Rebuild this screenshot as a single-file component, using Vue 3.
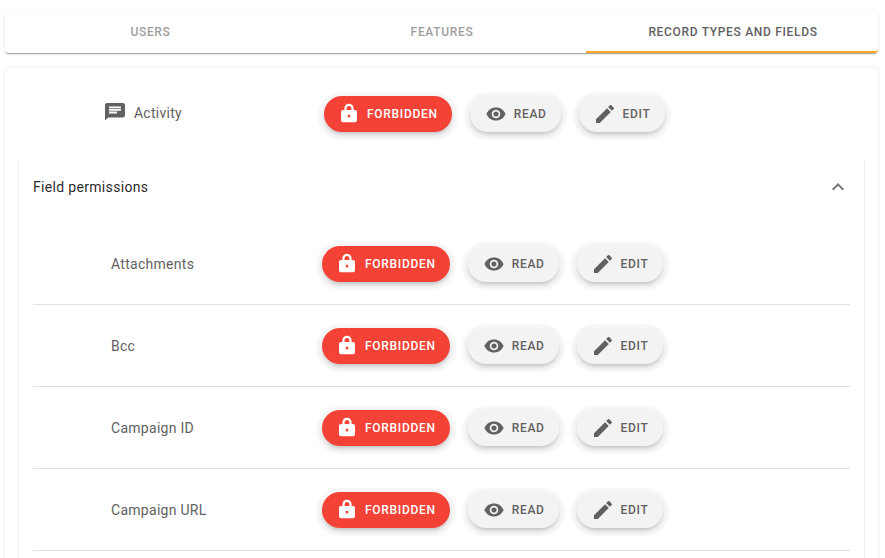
<template>
  <div class="page">
    <div class="tabs">
      <div
        v-for="tab in tabs"
        :key="tab"
        class="tab"
        :class="{ active: tab === activeTab }"
      >
        {{ tab }}
      </div>
    </div>

    <div class="card">
      <div class="record-row">
        <div class="record-name">
          <svg class="record-icon" viewBox="0 0 24 24"><path :d="icons.message" /></svg>
          <span>Activity</span>
        </div>
        <div class="perm-buttons">
          <button
            v-for="btn in buttons"
            :key="btn.label"
            type="button"
            class="perm-btn"
            :class="{ selected: btn.label === 'Forbidden' }"
          >
            <svg class="btn-icon" viewBox="0 0 24 24"><path :d="btn.icon" /></svg>
            {{ btn.label }}
          </button>
        </div>
      </div>

      <div class="panel">
        <div class="panel-header">
          <span>Field permissions</span>
          <svg class="chevron" viewBox="0 0 24 24"><path :d="icons.chevronUp" /></svg>
        </div>
        <div class="fields">
          <div v-for="field in fields" :key="field" class="field-row">
            <div class="field-name">{{ field }}</div>
            <div class="perm-buttons">
              <button
                v-for="btn in buttons"
                :key="btn.label"
                type="button"
                class="perm-btn"
                :class="{ selected: btn.label === 'Forbidden' }"
              >
                <svg class="btn-icon" viewBox="0 0 24 24"><path :d="btn.icon" /></svg>
                {{ btn.label }}
              </button>
            </div>
          </div>
        </div>
      </div>
    </div>
  </div>
</template>

<script setup>
const tabs = ['Users', 'Features', 'Record types and fields']
const activeTab = 'Record types and fields'

// Material icon paths, message, lock and eye adjusted to match the screenshot
const icons = {
  message: 'M20 2H4c-1.1 0-2 .9-2 2v15.5l3.2-3H20c1.1 0 2-.9 2-2V4c0-1.1-.9-2-2-2zM6 8h12v1.8H6V8zm8 4.4H6v-1.8h8v1.8zM18 7.2H6V5.4h12v1.8z',
  lock: 'M7.4 8V6.3C7.4 3.7 9.4 1.7 12 1.700s4.600 2 4.600 4.600V8H18c1.100 0 2 .9 2 2v8.200c0 1.100-.9 2-2 2H6c-1.100 0-2-.9-2-2V10c0-1.100.9-2 2-2h1.400zM9.600 8h4.800V6.300c0-1.400-1-2.400-2.400-2.400S9.600 4.900 9.600 6.300V8zM12 12.800a1.400 1.400 0 1 0 0 2.800 1.400 1.400 0 1 0 0-2.800z',
  eye: 'M12 5.5C7.6 5.5 3.9 8.2 2.4 12c1.5 3.8 5.2 6.5 9.600 6.500s8.100-2.700 9.600-6.500C20.100 8.200 16.400 5.500 12 5.500zM12 16.300c-2.400 0-4.300-1.900-4.300-4.300S9.600 7.700 12 7.700s4.300 1.900 4.300 4.300-1.900 4.300-4.300 4.300zm0-6.900c-1.400 0-2.600 1.200-2.600 2.600s1.200 2.600 2.600 2.600 2.600-1.200 2.600-2.600-1.200-2.600-2.600-2.600z',
  pencil: 'M3 17.25V21h3.75L17.81 9.94l-3.75-3.75L3 17.25zM20.71 7.04c.39-.39.39-1.02 0-1.41l-2.34-2.34c-.39-.39-1.02-.39-1.41 0l-1.83 1.83 3.75 3.75 1.83-1.83z',
  chevronUp: 'M7.41 15.41L12 10.83l4.59 4.58L18 14l-6-6-6 6z'
}

const buttons = [
  { label: 'Forbidden', icon: icons.lock },
  { label: 'Read', icon: icons.eye },
  { label: 'Edit', icon: icons.pencil }
]

const fields = ['Attachments', 'Bcc', 'Campaign ID', 'Campaign URL']
</script>

<style>
html,
body {
  margin: 0;
  height: 100%;
  overflow: hidden;
  background: #fff;
}
</style>

<style scoped>
.page {
  height: 558px;
  overflow: hidden;
  padding: 11px 7px 0 5px;
  box-sizing: border-box;
  font-family: Roboto, "Liberation Sans", sans-serif;
  color: #616161;
}

.tabs {
  display: grid;
  grid-template-columns: 291px 290px 292px;
  height: 42px;
  border-radius: 4px;
  background: #fff;
  box-shadow: 0 2px 1px -1px rgba(0, 0, 0, 0.2), 0 1px 1px 0 rgba(0, 0, 0, 0.14), 0 1px 3px 0 rgba(0, 0, 0, 0.12);
}

.tab {
  display: flex;
  align-items: center;
  justify-content: center;
  font-size: 12px;
  font-weight: 500;
  letter-spacing: 0.68px;
  text-transform: uppercase;
  color: #9e9e9e;
  box-sizing: border-box;
}

.tab + .tab {
  padding-left: 2px;
}

.tab.active {
  color: #616161;
  border-bottom: 2px solid #f9a825;
  border-radius: 0 0 4px 0;
  padding-top: 2px;
}

.card {
  margin-top: 15px;
  padding: 0 14px;
  border-radius: 4px;
  background: #fff;
  box-shadow: 0 0 3px rgba(0, 0, 0, 0.14);
}

.record-row {
  display: grid;
  grid-template-columns: 305px auto;
  align-items: center;
  height: 92px;
}

.record-name {
  display: flex;
  align-items: center;
  justify-content: flex-end;
  gap: 7px;
  padding-right: 142px;
  padding-bottom: 2px;
  font-size: 14px;
  letter-spacing: 0.02em;
}

.record-icon {
  width: 24px;
  height: 24px;
  fill: #616161;
}

.panel {
  background: #fff;
  box-shadow: -1px 0 0 #eee, 1px 0 0 #eee;
  padding: 0 14px 40px;
}

.panel-header {
  display: flex;
  align-items: center;
  justify-content: space-between;
  height: 54px;
  font-size: 14px;
  letter-spacing: 0.023em;
  color: rgba(0, 0, 0, 0.87);
}

.chevron {
  width: 24px;
  height: 24px;
  fill: #757575;
}

.fields {
  padding-top: 9px;
}

.field-row {
  display: grid;
  grid-template-columns: 289px auto;
  align-items: center;
  height: 81px;
  border-bottom: 1px solid #e0e0e0;
}

.field-name {
  padding-left: 78px;
  font-size: 14px;
  letter-spacing: 0.02em;
}

.perm-buttons {
  display: flex;
  gap: 18px;
}

.perm-btn {
  display: inline-flex;
  align-items: center;
  gap: 6px;
  height: 36px;
  padding: 0 14px;
  border: 0;
  border-radius: 18px;
  background: #f3f3f3;
  color: #616161;
  font-family: inherit;
  font-size: 12px;
  font-weight: 500;
  letter-spacing: 0.7px;
  text-transform: uppercase;
  box-shadow: 0 3px 4px -1px rgba(0, 0, 0, 0.22), 0 2px 2px 6px rgba(0, 0, 0, 0.04);
}

.perm-btn.selected {
  padding-left: 13px;
  background: #f44336;
  color: #fff;
}

.btn-icon {
  width: 24px;
  height: 24px;
  fill: currentColor;
  fill-rule: evenodd;
}
</style>
